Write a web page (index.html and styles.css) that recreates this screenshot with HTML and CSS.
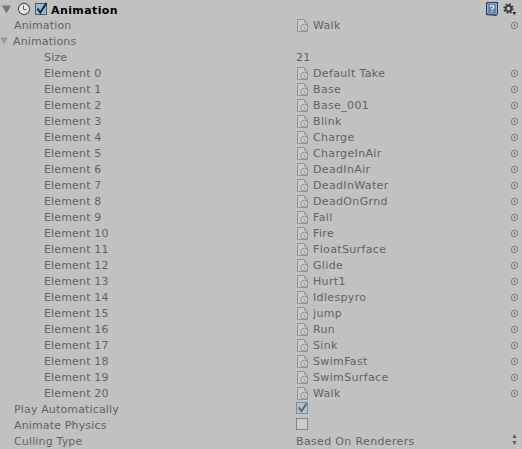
FILE: index.html
```html
<!DOCTYPE html>
<html>
<head>
    <meta charset="UTF-8">
    <title>Animation</title>
    <link rel="stylesheet" href="styles.css">
</head>
<body>
    <svg class="defs">
        <symbol id="clip" viewBox="0 0 13 15">
            <path d="M1.5 1.5h7l3 3v9h-10z" fill="#cdcdcd" stroke="#909090"/>
            <path d="M8.5 1.5v3h3" fill="#bbb" stroke="#a0a0a0"/>
            <circle cx="8.3" cy="9.6" r="3.5" fill="#d2d2d2" stroke="#8c8c8c"/>
            <path d="M8 7.5v2.7h1.8" fill="none" stroke="#999"/>
        </symbol>
        <symbol id="picker" viewBox="0 0 9 9">
            <circle cx="4.5" cy="4.5" r="3.2" fill="none" stroke="#757575"/>
            <circle cx="4.5" cy="4.5" r=".9" fill="#606060"/>
        </symbol>
    </svg>
    <div class="inspector">
        <div class="header">
            <svg class="fold" width="11" height="9"><path d="M1 .5h9L5.5 8.5z"/></svg>
            <svg class="clock" width="14" height="14">
                <circle cx="7" cy="7" r="5.6" fill="#ececec" stroke="#484848" stroke-width="1.1"/>
                <path d="M6.5 3.5v4h3" fill="none" stroke="#555"/>
            </svg>
            <svg class="check" width="14" height="14">
                <rect x="1.5" y="1.5" width="11" height="11" fill="#9fbad6" stroke="#48596c"/>
                <path d="M3.5 6.5l2.8 4L12.5 1" fill="none" stroke="#142338" stroke-width="2"/>
            </svg>
            <span class="title">Animation</span>
            <svg class="help" width="14" height="14">
                <path d="M1 1l1-1h11v12l-2 2-10-1z" fill="#263b57"/>
                <path d="M2.5 1.5h9v10.5l-9-.5z" fill="#6283aa" stroke="#92abc6"/>
                <path d="M5.2 5q0-1.5 1.8-1.5t1.8 1.4q0 1-1.8 1.8v1M7 8.9v1.2" fill="none" stroke="#fff" stroke-width="1.2"/>
            </svg>
            <svg class="gear" width="14" height="13">
                <circle cx="5.5" cy="5.5" r="4.3" fill="none" stroke="#333" stroke-width="1.8" stroke-dasharray="1.7 1.677"/>
                <circle cx="5.5" cy="5.5" r="2.8" fill="none" stroke="#333" stroke-width="1.8"/>
                <path d="M9.4 9h3.8l-1.9 3.2z" fill="#222"/>
            </svg>
        </div>
        <div class="row">
            <span class="label">Animation</span>
            <svg class="clip"><use href="#clip"/></svg>
            <span class="value">Walk</span>
            <svg class="picker"><use href="#picker"/></svg>
        </div>
        <div class="row array">
            <svg class="fold" width="9" height="8"><path d="M0 .5h8L4 7.5z"/></svg>
            <span class="label">Animations</span>
        </div>
        <div class="row child">
            <span class="label">Size</span>
            <span class="value">21</span>
        </div>
        <div id="clips"></div>
        <div class="row">
            <span class="label">Play Automatically</span>
            <svg class="toggle" width="13" height="13">
                <rect x=".5" y=".5" width="11" height="11" fill="#b3c2cf" stroke="#7d8891"/>
                <path d="M2.8 5.2l2.7 4L10.5 1.5" fill="none" stroke="#4b6277" stroke-width="1.8"/>
            </svg>
        </div>
        <div class="row">
            <span class="label">Animate Physics</span>
            <svg class="toggle" width="13" height="13">
                <rect x=".5" y=".5" width="11" height="11" fill="#cecece" stroke="#858585"/>
            </svg>
        </div>
        <div class="row">
            <span class="label">Culling Type</span>
            <span class="value">Based On Renderers</span>
            <svg class="popup" width="5" height="11"><path d="M.5 4l2-4 2 4zM.5 7h4l-2 4z"/></svg>
        </div>
    </div>
    <script>
        const clips = ['Default Take', 'Base', 'Base_001', 'Blink', 'Charge', 'ChargeInAir',
            'DeadInAir', 'DeadInWater', 'DeadOnGrnd', 'Fall', 'Fire', 'FloatSurface', 'Glide',
            'Hurt1', 'Idlespyro', 'jump', 'Run', 'Sink', 'SwimFast', 'SwimSurface', 'Walk'];

        document.getElementById('clips').innerHTML = clips.map((name, i) => `
            <div class="row child">
                <span class="label">Element ${i}</span>
                <svg class="clip"><use href="#clip"/></svg>
                <span class="value">${name}</span>
                <svg class="picker"><use href="#picker"/></svg>
            </div>`).join('');
    </script>
</body>
</html>
```
FILE: styles.css
```css
body {
    margin: 0;
    background-color: #c2c2c2;
    font-family: "DejaVu Sans", Verdana, sans-serif;
    font-size: 11px;
    color: #606060;
    overflow: hidden;
}
svg {
    flex: none;
}
.defs {
    display: none;
}
.header {
    display: flex;
    align-items: center;
    height: 17px;
    padding: 1px 5px 0 1px;
    box-sizing: border-box;
}
.fold {
    fill: #777;
}
.clock {
    margin-left: 5px;
}
.check {
    margin-left: 3px;
}
.title {
    margin: 2px 0 0 3px;
    font-weight: bold;
    letter-spacing: 0.4px;
    color: #000;
}
.help {
    margin-left: auto;
}
.gear {
    margin-left: 4px;
}
.row {
    display: flex;
    align-items: center;
    height: 16px;
    padding-left: 14px;
    line-height: 16px;
    white-space: nowrap;
}
.label {
    width: 282px;
    flex: none;
    padding-top: 2px;
    letter-spacing: 0.15px;
}
.value {
    padding-top: 2px;
    letter-spacing: 0.35px;
}
.child {
    padding-left: 44px;
}
.child .label {
    width: 252px;
}
.array {
    padding-left: 0;
}
.array .fold {
    margin-right: 4px;
    fill: #999;
}
.clip {
    width: 13px;
    height: 15px;
    margin-right: 4px;
}
.picker {
    width: 9px;
    height: 9px;
    margin: 0 3px 0 auto;
}
.toggle {
    margin-bottom: 1px;
}
.popup {
    margin: 0 5px 3px auto;
    fill: #555;
}
```
